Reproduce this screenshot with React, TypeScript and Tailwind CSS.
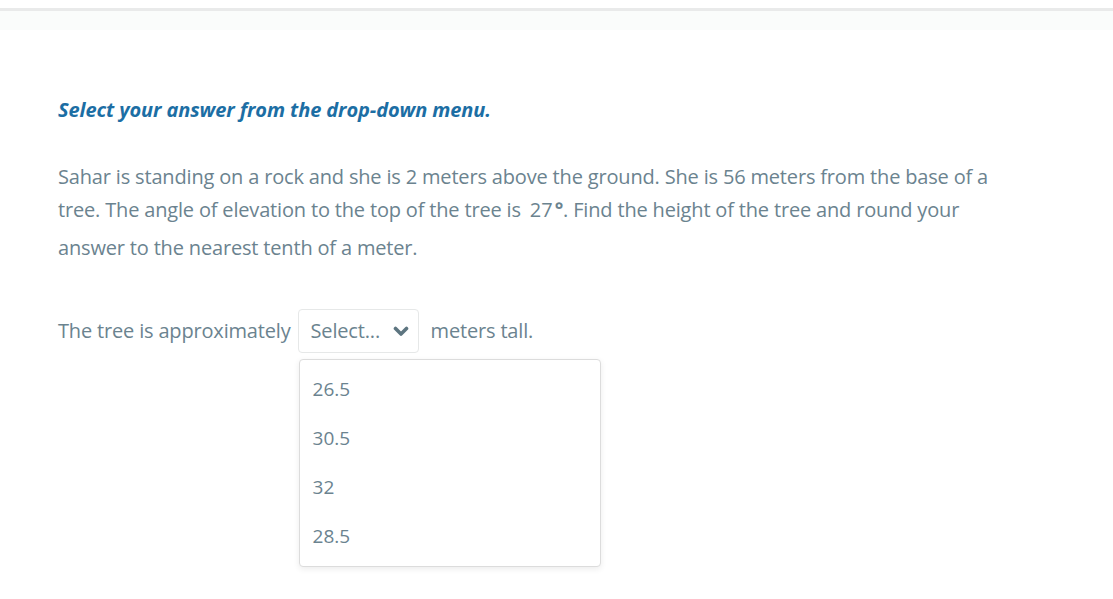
const options = ["26.5", "30.5", "32", "28.5"];

function Chevron() {
  return (
    <svg width="16" height="11" viewBox="0 0 16 11" className="text-[#5d7580]">
      <polyline
        points="2.5,2.5 8,8 13.5,2.5"
        fill="none"
        stroke="currentColor"
        strokeWidth="3.6"
        strokeLinecap="round"
        strokeLinejoin="round"
      />
    </svg>
  );
}

export default function App() {
  return (
    <main
      className="min-h-[599px] bg-white text-[#6b838f]"
      style={{ fontFamily: '"Open Sans", "Noto Sans", sans-serif' }}
    >
      <div className="h-2 bg-white" />
      <div className="h-[3px] bg-[#e9eaea]" />
      <div className="h-[19px] bg-[#fafcfb]" />

      <section className="pl-[58px] pt-[65px]">
        <h2 className="text-[20px] font-bold italic tracking-[-0.1px] text-[#1c6ea4]">
          Select your answer from the drop-down menu.
        </h2>

        <div className="mt-[35px] text-[20px] tracking-[-0.17px]">
          <p className="leading-[33px]">
            Sahar is standing on a rock and she is 2 meters above the ground. She is 56 meters from the base of a
          </p>
          <p className="leading-[33px]">
            tree. The angle of elevation to the top of the tree is{" "}
            <span className="ml-1 tracking-normal">27</span>
            <span className="ml-0.5 font-bold">°</span>. Find the height of the tree and round your
          </p>
          <p className="mt-[5px] leading-[33px]">answer to the nearest tenth of a meter.</p>
        </div>

        <div className="mt-[45px] flex items-center text-[20px] tracking-[-0.17px]">
          <span className="-mr-[3px]">The tree is approximately</span>
          <div className="relative ml-[10px] mr-[12px]">
            <button
              type="button"
              className="flex h-[44px] w-[121px] items-center gap-[13px] rounded-[4px] border border-[#e6e8e8] bg-white pl-3 text-[#6b838f]"
            >
              <span>Select...</span>
              <Chevron />
            </button>
            <ul className="absolute left-[1px] top-[50px] w-[302px] rounded-[4px] border border-[#dcdcdc] bg-white py-[5px] shadow-[0_2px_6px_rgba(0,0,0,0.08)]">
              {options.map((o) => (
                <li key={o} className="flex h-[49px] items-center px-[13px] text-[19px] tracking-normal">
                  {o}
                </li>
              ))}
            </ul>
          </div>
          <span>meters tall.</span>
        </div>
      </section>
    </main>
  );
}
